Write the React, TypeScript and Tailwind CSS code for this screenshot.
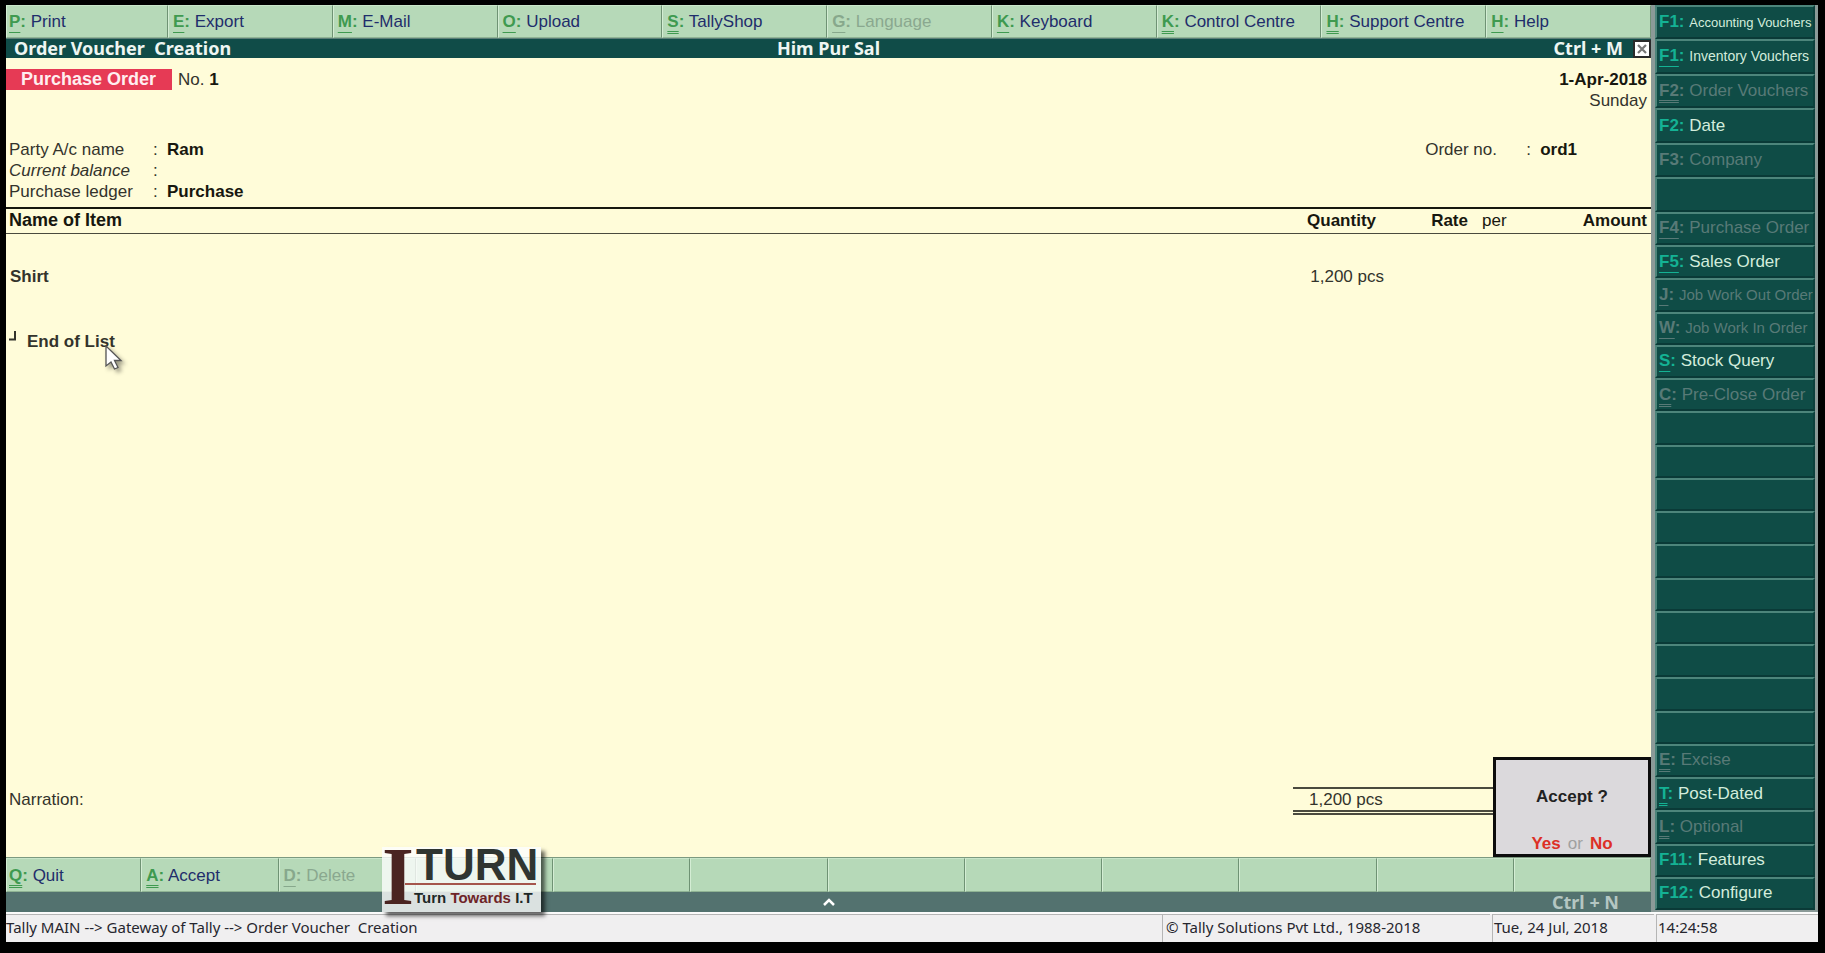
import React from "react";

type Item = { k?: string; label?: string; line?: 0 | 1 | 2; off?: boolean; size?: string };

const topItems: Item[] = [
  { k: "P", label: "Print", line: 1 },
  { k: "E", label: "Export", line: 1 },
  { k: "M", label: "E-Mail", line: 1 },
  { k: "O", label: "Upload", line: 1 },
  { k: "S", label: "TallyShop", line: 2 },
  { k: "G", label: "Language", line: 1, off: true },
  { k: "K", label: "Keyboard", line: 1 },
  { k: "K", label: "Control Centre", line: 2 },
  { k: "H", label: "Support Centre", line: 2 },
  { k: "H", label: "Help", line: 1 },
];

const bottomItems: Item[] = [
  { k: "Q", label: "Quit", line: 2 },
  { k: "A", label: "Accept", line: 2 },
  { k: "D", label: "Delete", line: 1, off: true },
  {}, {}, {}, {}, {}, {}, {}, {}, {},
];

const sideTop: Item[] = [
  { k: "F1", label: "Accounting Vouchers", size: "text-[13px]" },
  { k: "F1", label: "Inventory Vouchers", line: 1, size: "text-[14px]" },
  { k: "F2", label: "Order Vouchers", line: 2, off: true },
  { k: "F2", label: "Date" },
  { k: "F3", label: "Company", off: true },
  {},
];

const sideRest: Item[] = [
  { k: "F4", label: "Purchase Order", line: 1, off: true },
  { k: "F5", label: "Sales Order", line: 1 },
  { k: "J", label: "Job Work Out Order", line: 1, off: true, size: "text-[15px]" },
  { k: "W", label: "Job Work In Order", line: 1, off: true, size: "text-[15px]" },
  { k: "S", label: "Stock Query", line: 1 },
  { k: "C", label: "Pre-Close Order", line: 2, off: true },
  {}, {}, {}, {}, {}, {}, {}, {}, {}, {},
  { k: "E", label: "Excise", line: 2, off: true },
  { k: "T", label: "Post-Dated", line: 2 },
  { k: "L", label: "Optional", line: 2, off: true },
  { k: "F11", label: "Features" },
  { k: "F12", label: "Configure" },
];

const underline = [
  "",
  "underline decoration-1 underline-offset-[5px]",
  "underline decoration-double decoration-1 underline-offset-[4px]",
];

function BarButton({ item }: { item: Item }) {
  return (
    <button
      type="button"
      disabled={item.off || !item.k}
      className="min-w-0 flex-1 whitespace-pre border border-t-[#c9e6ca] border-b-[#8fb394] border-l-[#d4edd4] border-r-[#6f9274] bg-[#b6d9b8] pl-1 text-left first:pl-[2px]"
    >
      {item.k && (
        <>
          <span className={item.off ? "font-bold text-[#87a88c]" : "font-bold text-[#3f9a50]"}>
            <span className={underline[item.line ?? 0]}>{item.k}</span>:
          </span>
          <span className={item.off ? "text-[#8aa88f]" : "text-[#1f2d6b]"}> {item.label}</span>
        </>
      )}
    </button>
  );
}

function SideButton({ item }: { item: Item }) {
  return (
    <button
      type="button"
      disabled={item.off || !item.k}
      className="min-h-0 w-full flex-1 whitespace-pre border-2 border-t-[#4d857b] border-b-[#0a3a37] border-l-[#4d857b] border-r-[#0c403c] bg-[#0f4c46] pb-px pl-[2px] text-left"
    >
      {item.k && (
        <>
          <span className={item.off ? "font-bold text-[#587a77]" : "font-bold text-[#14b294]"}>
            <span className={underline[item.line ?? 0]}>{item.k}</span>:{" "}
          </span>
          <span className={`${item.size ?? "text-[17px]"} ${item.off ? "text-[#587a77]" : "text-[#d3ecdc]"}`}>
            {item.label}
          </span>
        </>
      )}
    </button>
  );
}

function Field({ name, value, italic }: { name: string; value?: string; italic?: boolean }) {
  return (
    <div className="flex">
      <dt className={italic ? "w-[144px] italic" : "w-[144px]"}>{name}</dt>
      <dd className="flex">
        <span className="w-[14px]">:</span>
        <b className="text-[#17170f]">{value}</b>
      </dd>
    </div>
  );
}

function Logo() {
  return (
    <div className="absolute bottom-0 left-[376px] flex h-[65px] w-[159px] items-start bg-[#fcfdfd]/80 shadow-[4px_4px_4px_rgba(0,0,0,0.6)]">
      <span className="w-[31px] font-['Liberation_Serif',serif] text-[82px] leading-[60px] font-bold text-[#4a2421]">I</span>
      <div className="flex-1">
        <div className="pl-[3px] text-[44px] leading-[36px] font-bold text-[#2f3531]">TURN</div>
        <div className="-ml-2 mr-[5px] h-[2px] bg-[#a5564c]" />
        <div className="pl-px text-[15px] leading-[26px] font-bold whitespace-nowrap text-[#1d2826]">
          Turn <span className="text-[#6e2427]">Towards</span> I.T
        </div>
      </div>
    </div>
  );
}

export default function App() {
  return (
    <div className="flex min-h-screen flex-col bg-black pt-[5px] pr-[7px] pb-[11px] pl-[6px] font-['Liberation_Sans',Arial,sans-serif] text-[17px] leading-[21px] text-[#33332c]">
      <div className="flex flex-1">
        <div className="flex min-w-0 flex-1 flex-col">
          <nav className="flex h-[33px] *:first:max-w-[162px]">
            {topItems.map((it, i) => (
              <BarButton key={i} item={it} />
            ))}
          </nav>

          <header className="grid h-[20px] grid-cols-3 items-center border-t border-[#5b7f78] bg-[#104c48] font-['Noto_Sans',sans-serif] text-[18px] font-bold leading-[16px] text-[#eef6f2]">
            <h1 className="whitespace-pre pb-px pl-2">Order Voucher  Creation</h1>
            <span className="pb-px text-center">Him Pur Sal</span>
            <div className="flex items-center justify-end gap-[10px]">
              <span className="pb-px">Ctrl + M</span>
              <button type="button" aria-label="Close" className="flex h-[18px] w-[18px] items-center justify-center border-2 border-[#2a2a2a] bg-white">
                <svg viewBox="0 0 12 12" className="h-3 w-3" stroke="#777" strokeWidth="2.2">
                  <path d="M2 2l8 8M10 2l-8 8" />
                </svg>
              </button>
            </div>
          </header>

          <main className="relative flex flex-1 flex-col bg-[#fffcd9]">
            <div className="flex items-start justify-between pt-[11px] pr-1">
              <div className="flex items-center gap-[6px]">
                <h2 className="w-[166px] bg-[#e63a55] pl-[15px] text-[18px] font-bold text-[#ffeef0]">Purchase Order</h2>
                <span>
                  No. <b className="text-[#17170f]">1</b>
                </span>
              </div>
              <div className="text-right">
                <b className="block text-[#17170f]">1-Apr-2018</b>
                <span>Sunday</span>
              </div>
            </div>

            <div className="flex items-start justify-between pt-[28px] pr-[74px] pl-[3px]">
              <dl>
                <Field name="Party A/c name" value="Ram" />
                <Field name="Current balance" italic />
                <Field name="Purchase ledger" value="Purchase" />
              </dl>
              <dl className="flex">
                <dt className="w-[101px]">Order no.</dt>
                <dd className="flex">
                  <span className="w-[14px]">:</span>
                  <b className="text-[#17170f]">ord1</b>
                </dd>
              </dl>
            </div>

            <table className="mt-[5px] w-full table-fixed border-collapse">
              <colgroup>
                <col />
                <col className="w-[120px]" />
                <col className="w-[91px]" />
                <col className="w-[44px]" />
                <col className="w-[136px]" />
              </colgroup>
              <thead>
                <tr className="h-[25px] border-t-2 border-b border-t-[#17170f] border-b-[#4a4a3e] text-[#17170f]">
                  <th className="p-0 pl-[3px] text-left text-[18px]">Name of Item</th>
                  <th className="p-0 pr-1 text-right">Quantity</th>
                  <th className="p-0 pr-[3px] text-right">Rate</th>
                  <th className="p-0 pl-[11px] text-left font-normal">per</th>
                  <th className="p-0 pr-1 text-right">Amount</th>
                </tr>
              </thead>
              <tbody>
                <tr>
                  <td className="p-0 pt-[32px] pl-1 font-bold">Shirt</td>
                  <td className="p-0 pt-[32px] text-right">
                    <span className="-mr-1">1,200 pcs</span>
                  </td>
                  <td colSpan={3} />
                </tr>
                <tr>
                  <td className="p-0 pt-[44px] pl-[3px] font-bold" colSpan={5}>
                    <div className="flex gap-[10px]">
                      <svg viewBox="0 0 8 10" className="h-[10px] w-2" fill="none" stroke="#33332c" strokeWidth="2">
                        <path d="M0 8.500h6V0" />
                      </svg>
                      <span>End of List</span>
                    </div>
                  </td>
                </tr>
              </tbody>
            </table>

            <svg viewBox="0 0 20 28" className="absolute top-[287px] left-[99px] h-7 w-5 drop-shadow-[3px_3px_2px_rgba(0,0,0,0.4)]">
              <path d="M1 1v20l5-4 3.500 7 3.500-1.500-3.500-7h6.500z" fill="#fff" stroke="#555" strokeWidth="1.300" />
            </svg>

            <div className="mt-auto mb-[42px] flex justify-between pl-[3px]">
              <label htmlFor="narration" className="pt-[2px]">Narration:</label>
              <input id="narration" className="min-w-0 flex-1 bg-transparent outline-none" />
              <div className="h-[28px] w-[358px] border-t-2 border-b-[5px] border-double border-[#4a4a3e] pl-[16px] leading-[22px]">1,200 pcs</div>
            </div>

            <div role="dialog" aria-label="Accept" className="absolute right-0 bottom-0 flex h-[100px] w-[158px] flex-col items-center border-[3px] border-[#0c0c0c] bg-[#dbd9dc] pt-[26px] text-[#222]">
              <b>Accept ?</b>
              <div className="mt-auto text-[#a0a0a0]">
                <button type="button" className="font-bold text-[#dd3026]">Yes</button>
                <span className="mx-[7px]">or</span>
                <button type="button" className="font-bold text-[#dd3026]">No</button>
              </div>
            </div>
          </main>

          <footer className="relative">
            <nav className="flex h-[35px] border-t border-[#7c9a80]">
              {bottomItems.map((it, i) => (
                <BarButton key={i} item={it} />
              ))}
            </nav>
            <div className="grid h-[20px] grid-cols-3 items-center bg-[#53726f] px-[32px] font-['Noto_Sans',sans-serif] text-[18px] font-bold leading-[18px] text-[#b4c6c2]">
              <svg viewBox="0 0 12 8" className="col-start-2 h-2 w-3 justify-self-center" fill="none" stroke="#fff" strokeWidth="2.500">
                <path d="M1 7l5-5 5 5" />
              </svg>
              <span className="text-right">Ctrl + N</span>
            </div>
            <Logo />
          </footer>
        </div>

        <aside className="flex w-[167px] flex-col border-r-[3px] border-b-2 border-l-[4px] border-[#8b9a98] bg-[#0f4c46]">
          <div className="flex flex-[207] flex-col">
            {sideTop.map((it, i) => (
              <SideButton key={i} item={it} />
            ))}
          </div>
          <div className="flex flex-[699] flex-col">
            {sideRest.map((it, i) => (
              <SideButton key={i} item={it} />
            ))}
          </div>
        </aside>
      </div>

      <div className="flex h-[30px] items-stretch border-t-2 border-[#fbfbfb] bg-[#f0eff0] font-['Noto_Sans',sans-serif] text-[15px] leading-[25px] text-[#26262e]">
        <span className="flex-1 whitespace-pre border-t border-[#b5b5b5]">{"Tally MAIN --> Gateway of Tally --> Order Voucher  Creation"}</span>
        <span className="w-[328px] border-t border-l border-[#b5b5b5] pl-[3px]">© Tally Solutions Pvt Ltd., 1988-2018</span>
        <span className="ml-[2px] w-[162px] border-t border-l border-[#b5b5b5] pl-px">Tue, 24 Jul, 2018</span>
        <span className="ml-[2px] w-[162px] border-t border-l border-[#b5b5b5] pl-px">14:24:58</span>
      </div>
    </div>
  );
}
